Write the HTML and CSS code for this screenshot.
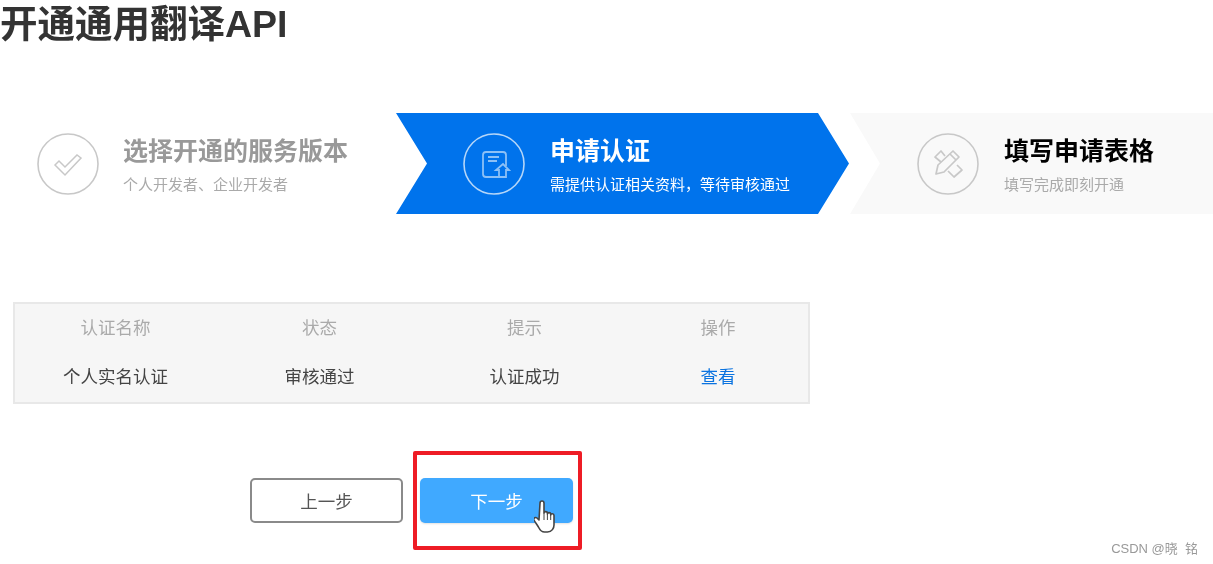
FILE: index.html
```html
<!DOCTYPE html>
<html lang="zh-CN">
<head>
  <meta charset="UTF-8" />
  <meta name="viewport" content="width=device-width, initial-scale=1.0"/>
  <title>开通通用翻译API</title>
  <link rel="stylesheet" href="styles.css">
</head>
<body>

<h1>开通通用翻译API</h1>

<div class="steps">
  <div class="step step-done">
    <div class="step-icon">
      <svg viewBox="0 0 62 62" width="62" height="62" fill="none" stroke="currentColor">
        <circle cx="31" cy="31" r="30" stroke-width="1.6"/>
        <path d="M18 32l4-4 6 6 12-12 4 3-16 17z" stroke-width="1.5" stroke-linejoin="miter"/>
      </svg>
    </div>
    <div>
      <div class="step-title">选择开通的服务版本</div>
      <div class="step-sub">个人开发者、企业开发者</div>
    </div>
  </div>
  <div class="step step-active">
    <div class="step-icon">
      <svg viewBox="0 0 62 62" width="62" height="62" fill="none" stroke="currentColor">
        <circle cx="31" cy="31" r="30" stroke-width="1.6"/>
        <g class="glyph">
          <path d="M36 44H23a3 3 0 0 1-3-3V22a3 3 0 0 1 3-3h17a3 3 0 0 1 3 3v11" stroke-width="1.800"/>
          <path d="M25 24h11M25 28h9" stroke-width="1.800"/>
          <path d="M36 44v-7h-3l7-6 6 6h-3v7z" stroke-width="1.800"/>
        </g>
      </svg>
    </div>
    <div>
      <div class="step-title">申请认证</div>
      <div class="step-sub">需提供认证相关资料，等待审核通过</div>
    </div>
  </div>
  <div class="step step-todo">
    <div class="step-icon">
      <svg viewBox="0 0 62 62" width="62" height="62" fill="none" stroke="currentColor">
        <circle cx="31" cy="31" r="30" stroke-width="1.6"/>
        <path d="M19 41l2-9 15-14 6 6-15 15z" stroke-width="1.700" stroke-linejoin="round"/>
        <path d="M33 21l6 6" stroke-width="1.700"/>
        <path d="M24 29l-6-5 6-6 4 5M31 38l6 6 8-7-5-5" stroke-width="1.700" stroke-linejoin="round"/>
      </svg>
    </div>
    <div>
      <div class="step-title">填写申请表格</div>
      <div class="step-sub">填写完成即刻开通</div>
    </div>
  </div>
</div>

<table class="auth-table">
  <tr>
    <th>认证名称</th>
    <th>状态</th>
    <th>提示</th>
    <th>操作</th>
  </tr>
  <tr>
    <td>个人实名认证</td>
    <td>审核通过</td>
    <td>认证成功</td>
    <td><a href="#">查看</a></td>
  </tr>
</table>

<div class="actions">
  <button class="btn btn-prev">上一步</button>
  <button class="btn btn-next">下一步</button>
  <div class="highlight"></div>
  <svg class="hand" viewBox="0 0 24 34" width="24" height="34">
    <path d="M6 3.200c0-3 4-3 4 0V13c0-1.800 3.400-1.800 3.400 0v1c0-1.800 3.300-1.800 3.300 0v1c0-1.800 3.300-1.600 3.300.4V25c0 3-2 7-6.500 7h-3c-3 0-4.500-2-5.500-4-1-2-4-6-5-8-.6-2 1.500-3.200 3-2l2 2z" fill="#fff" stroke="#444" stroke-width="1.600" stroke-linejoin="round"/>
    <path d="M10 13v7M13.400 14v6M16.700 15v5" fill="none" stroke="#444" stroke-width="1"/>
  </svg>
</div>

<div class="watermark">CSDN @晓&nbsp;&nbsp;铭</div>

</body>
</html>
```

FILE: styles.css
```css
* { box-sizing: border-box; }

html { background: #fff; }

body {
  margin: 0;
  height: 564px;
  overflow: hidden;
  position: relative;
  font-family: "Liberation Sans", "Noto Sans CJK SC", sans-serif;
  color: #333;
  filter: blur(0.6px);
}

h1 {
  margin: 0;
  padding-top: 3px;
  height: 113px;
  font-size: 37.500px;
  line-height: 42px;
  font-weight: bold;
  color: #333;
}

.steps {
  display: flex;
  height: 101px;
}

.step {
  display: flex;
  align-items: center;
  height: 100%;
}

.step-icon {
  flex: none;
  width: 62px;
  height: 62px;
  margin-right: 25px;
}

.step-icon svg { display: block; }

.step-title {
  font-size: 25px;
  line-height: 32px;
  font-weight: bold;
  margin-top: 2px;
}

.step-sub {
  font-size: 15px;
  line-height: 20px;
  margin-top: 8px;
}

.step-done {
  width: 396px;
  padding-left: 37px;
  color: #c8c8c8;
}
.step-done .step-title { color: #999; }
.step-done .step-sub { color: #aaa; }
.step-done .step-icon { margin-right: 24px; }

.step-active {
  width: 453px;
  padding-left: 67px;
  background: #0073ec;
  color: #fff;
  clip-path: polygon(0 0, 422px 0, 100% 50%, 422px 100%, 0 100%, 31px 50%);
}
.step-active .step-icon { color: #b5d6f8; }
.step-active .glyph { color: #8cc0f6; }

.step-todo {
  flex: 1;
  margin-left: 1px;
  padding-left: 67px;
  background: #f9f9f9;
  clip-path: polygon(0 0, 100% 0, 100% 100%, 0 100%, 30px 50%);
  color: #c8c8c8;
}
.step-todo .step-title { color: #000; }
.step-todo .step-sub { color: #aaa; }

.auth-table {
  margin: 88px 0 0 13px;
  width: 797px;
  height: 100px;
  table-layout: fixed;
  border-collapse: collapse;
  background: #f6f6f6;
  border: 2px solid #e8e8e8;
  font-size: 17.500px;
  text-align: center;
}

.auth-table th,
.auth-table td {
  padding: 0 0 5px;
  font-weight: normal;
  height: 50px;
}

.auth-table tr > :not(:last-child) { padding-right: 2px; }

.auth-table th { color: #aaa; }
.auth-table td { color: #444; }
.auth-table a { color: #0a73e0; text-decoration: none; }

.auth-table th:nth-child(1) { width: 204px; }
.auth-table th:nth-child(2) { width: 205px; }
.auth-table th:nth-child(3) { width: 205px; }

.actions {
  position: relative;
  display: flex;
  gap: 17px;
  margin: 74px 0 0 250px;
}

.btn {
  width: 153px;
  height: 45px;
  padding: 0;
  border-radius: 5px;
  font-family: inherit;
  font-size: 17.500px;
}

.btn-prev {
  background: #fff;
  border: 2px solid #8a8a8a;
  color: #555;
}

.btn-next {
  background: #40a9ff;
  border: none;
  color: #fff;
  box-shadow: 0 1px 2px rgba(0, 0, 0, 0.12);
}

.highlight {
  position: absolute;
  left: 163px;
  top: -27px;
  width: 169px;
  height: 99px;
  border: 4px solid #ee1c25;
  border-radius: 2px;
}

.hand {
  position: absolute;
  left: 284px;
  top: 22px;
}

.watermark {
  position: absolute;
  right: 15px;
  bottom: 7px;
  font-size: 13px;
  line-height: 16px;
  color: #999;
}
```
